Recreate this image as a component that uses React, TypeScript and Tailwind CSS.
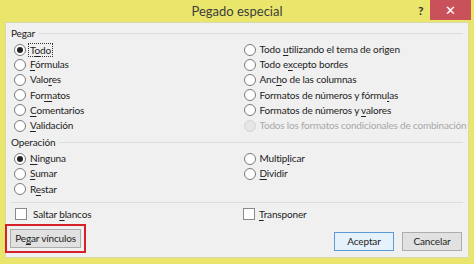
import React from 'react';

const font = { fontFamily: 'Lato, "Noto Sans", sans-serif' };

function Radio({ checked, disabled }: { checked?: boolean; disabled?: boolean }) {
  return (
    <span
      className={`flex h-[12px] w-[12px] shrink-0 items-center justify-center rounded-full border ${
        disabled ? 'border-[#d4d4d4] bg-[#e6e6e6]' : 'border-[#7a7a7a] bg-white'
      }`}
    >
      {checked && <span className="h-[6px] w-[6px] rounded-full bg-[#222]" />}
    </span>
  );
}

function Label({ text, u, focus }: { text: string; u: number; focus?: boolean }) {
  return (
    <span className={focus ? '-ml-[2px] border border-dotted border-[#333] px-[1px] leading-[12px]' : ''}>
      {text.slice(0, u)}
      <span className="underline underline-offset-2">{text[u]}</span>
      {text.slice(u + 1)}
    </span>
  );
}

function Option({ text, u, checked, focus, disabled }: { text: string; u: number; checked?: boolean; focus?: boolean; disabled?: boolean }) {
  return (
    <div className={`flex h-[15.2px] items-center gap-[4px] whitespace-nowrap ${disabled ? 'text-[#a8a8a8]' : 'text-[#222]'}`}>
      <Radio checked={checked} disabled={disabled} />
      {disabled ? <span className="tracking-[-0.2px]">{text}</span> : <Label text={text} u={u} focus={focus} />}
    </div>
  );
}

function Section({ title }: { title: string }) {
  return (
    <div className="flex items-center gap-[4px] text-[#222]">
      <span>{title}</span>
      <div className="h-px flex-1 bg-[#dcdcdc]" />
    </div>
  );
}

export default function App() {
  return (
    <div className="flex h-[264px] w-[474px] flex-col overflow-hidden bg-[#e9e66b] text-[10px] leading-[15px] tracking-[-0.15px]" style={font}>
      <div className="relative flex h-[22px] shrink-0 items-center justify-center">
        <span className="text-[13px] tracking-normal text-[#3d3d3d]">Pegado especial</span>
        <span className="absolute left-[418px] top-[3px] text-[12px] font-bold text-[#333]">?</span>
        <div className="absolute right-[3px] top-0 flex h-[20px] w-[41px] items-center justify-center bg-[#c9525a] text-[13px] text-white">
          ✕
        </div>
      </div>
      <div className="mx-[5px] flex h-[236px] flex-col border border-[#d9d9b0] bg-[#f0f0f0] px-[5px] pt-[3px]">
        <Section title="Pegar" />
        <div className="grid grid-cols-2 pl-[3px] pt-[1px]">
          <div className="flex flex-col">
            <Option text="Todo" u={1} checked focus />
            <Option text="Fórmulas" u={0} />
            <Option text="Valores" u={4} />
            <Option text="Formatos" u={3} />
            <Option text="Comentarios" u={0} />
            <Option text="Validación" u={0} />
          </div>
          <div className="ml-[5px] flex flex-col">
            <Option text="Todo utilizando el tema de origen" u={5} />
            <Option text="Todo excepto bordes" u={6} />
            <Option text="Ancho de las columnas" u={3} />
            <Option text="Formatos de números y fórmulas" u={27} />
            <Option text="Formatos de números y valores" u={22} />
            <Option text="Todos los formatos condicionales de combinación" u={0} disabled />
          </div>
        </div>
        <div className="pt-[2px]">
          <Section title="Operación" />
        </div>
        <div className="grid grid-cols-2 pl-[3px] pt-[1px]">
          <div className="flex flex-col">
            <Option text="Ninguna" u={0} checked />
            <Option text="Sumar" u={0} />
            <Option text="Restar" u={1} />
          </div>
          <div className="ml-[5px] flex flex-col">
            <Option text="Multiplicar" u={6} />
            <Option text="Dividir" u={0} />
          </div>
        </div>
        <div className="mt-[5px] h-px bg-[#dcdcdc]" />
        <div className="grid grid-cols-2 pl-[4px] pt-[4px]">
          <div className="flex items-center gap-[6px] whitespace-nowrap text-[#222]">
            <span className="h-[12px] w-[12px] border border-[#8a8a8a] bg-white" />
            <Label text="Saltar blancos" u={7} />
          </div>
          <div className="ml-[4px] flex items-center gap-[4px] whitespace-nowrap text-[#222]">
            <span className="h-[12px] w-[12px] border border-[#8a8a8a] bg-white" />
            <Label text="Transponer" u={0} />
          </div>
        </div>
        <div className="mt-auto flex items-end justify-between pb-[4px]">
          <div className="-ml-[6px] border-2 border-[#d8202a] p-[3px]">
            <button className="h-[19px] w-[71px] whitespace-nowrap border border-[#adadad] bg-[#e1e1e1] text-[10px] text-[#222]">
              Pe<span className="underline underline-offset-2">g</span>ar vínculos
            </button>
          </div>
          <div className="flex gap-[8px] pb-[2px] pr-[1px]">
            <button className="h-[19px] w-[60px] border border-[#5a9bd5] bg-[#e5f1fb] text-[10px] text-[#222]">Aceptar</button>
            <button className="h-[19px] w-[60px] border border-[#adadad] bg-[#e1e1e1] text-[10px] text-[#222]">Cancelar</button>
          </div>
        </div>
      </div>
    </div>
  );
}
